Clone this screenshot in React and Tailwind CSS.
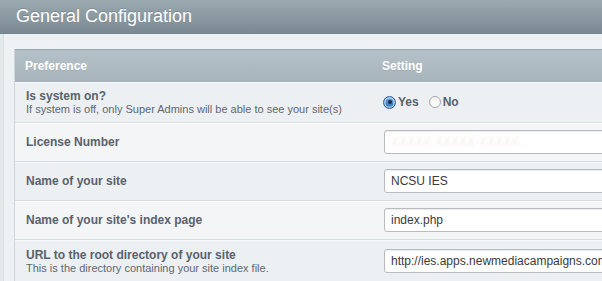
import React from "react";

const Label = ({ title, sub }) => (
  <div className="flex flex-col">
    <div className="text-[12px] leading-[14px] font-bold text-[#59626c]">{title}</div>
    {sub && <div className="text-[11px] leading-[13px] text-[#5d6770]">{sub}</div>}
  </div>
);

const Input = ({ value, placeholder }) => (
  <div className="ml-[2px] h-[24px] w-[240px] shrink-0 rounded-[3px] border border-[#b9bcbf] bg-white pl-[6px] flex items-center overflow-hidden shadow-[inset_0_1px_1px_rgba(0,0,0,0.08)]">
    {value ? (
      <span className="text-[12px] text-[#3a3a3a] whitespace-nowrap">{value}</span>
    ) : (
      <span className="text-[12px] text-[#f9eded] whitespace-nowrap blur-[0.8px]">{placeholder}</span>
    )}
  </div>
);

const Row = ({ dark, h, children, setting, last }) => (
  <div
    className={`flex ${h} ${dark ? "bg-[#edf0f3]" : "bg-[#f3f5f7]"} ${last ? "" : "border-b border-[#d6dce1]"} shadow-[inset_0_1px_0_rgba(255,255,255,0.7)]`}
  >
    <div className="w-[367px] shrink-0 pl-[11px] flex items-center">{children}</div>
    <div className="flex-1 flex items-center">{setting}</div>
  </div>
);

export default function App() {
  return (
    <div
      className="w-[602px] h-[281px] overflow-hidden bg-[#edf1f4]"
      style={{ fontFamily: '"Liberation Sans", Arial, sans-serif' }}
    >
      <div className="h-[34px] bg-gradient-to-b from-[#9ba9b1] to-[#7b8992] pl-4 text-white text-[18px] leading-[33px] [text-shadow:0_-1px_0_rgba(0,0,0,0.15)] border-b border-[#76848d]">
        General Configuration
      </div>
      <div className="flex h-[247px]">
        <div className="w-[4px] bg-[#e4e9ec] border-r border-[#d8dee2] shrink-0" />
        <div className="flex-1 pl-[10px] pt-[15px]">
          <div className="w-[620px] border-l border-[#cfd6db]">
            <div className="h-[33px] flex border-t border-[#98a6ae] bg-gradient-to-b from-[#b5c1c8] to-[#a8b4bc] text-white text-[12px] font-bold [text-shadow:0_1px_0_rgba(0,0,0,0.08)]">
              <div className="w-[367px] shrink-0 pl-[10px] flex items-center">Preference</div>
              <div className="flex-1 pl-[0px] flex items-center">Setting</div>
            </div>
            <Row
              dark
              h="h-[41px]"
              setting={
                <div className="ml-[1px] flex items-center text-[12px] font-bold text-[#59626c]">
                  <span className="w-[13px] h-[13px] rounded-full bg-gradient-to-b from-[#6fa7de] to-[#2a6fc1] border border-[#2f5f96] flex items-center justify-center shadow-[inset_0_0_0_1.5px_rgba(255,255,255,0.55)]">
                    <span className="w-[4px] h-[4px] rounded-full bg-[#1b2b40]" />
                  </span>
                  <span className="ml-[2px]">Yes</span>
                  <span className="ml-[10px] w-[12px] h-[12px] rounded-full bg-gradient-to-b from-[#f2f2f2] to-[#ffffff] border border-[#a4a8ac]" />
                  <span className="ml-[2px]">No</span>
                </div>
              }
            >
              <Label
                title="Is system on?"
                sub="If system is off, only Super Admins will be able to see your site(s)"
              />
            </Row>
            <Row h="h-[39px]" setting={<Input placeholder="XXXXX-XXXXX-XXXXX" />}>
              <Label title="License Number" />
            </Row>
            <Row dark h="h-[39px]" setting={<Input value="NCSU IES" />}>
              <Label title="Name of your site" />
            </Row>
            <Row h="h-[39px]" setting={<Input value="index.php" />}>
              <Label title="Name of your site's index page" />
            </Row>
            <Row dark h="h-[42px]" last setting={<Input value="http://ies.apps.newmediacampaigns.com/" />}>
              <Label
                title="URL to the root directory of your site"
                sub="This is the directory containing your site index file."
              />
            </Row>
          </div>
        </div>
      </div>
    </div>
  );
}
